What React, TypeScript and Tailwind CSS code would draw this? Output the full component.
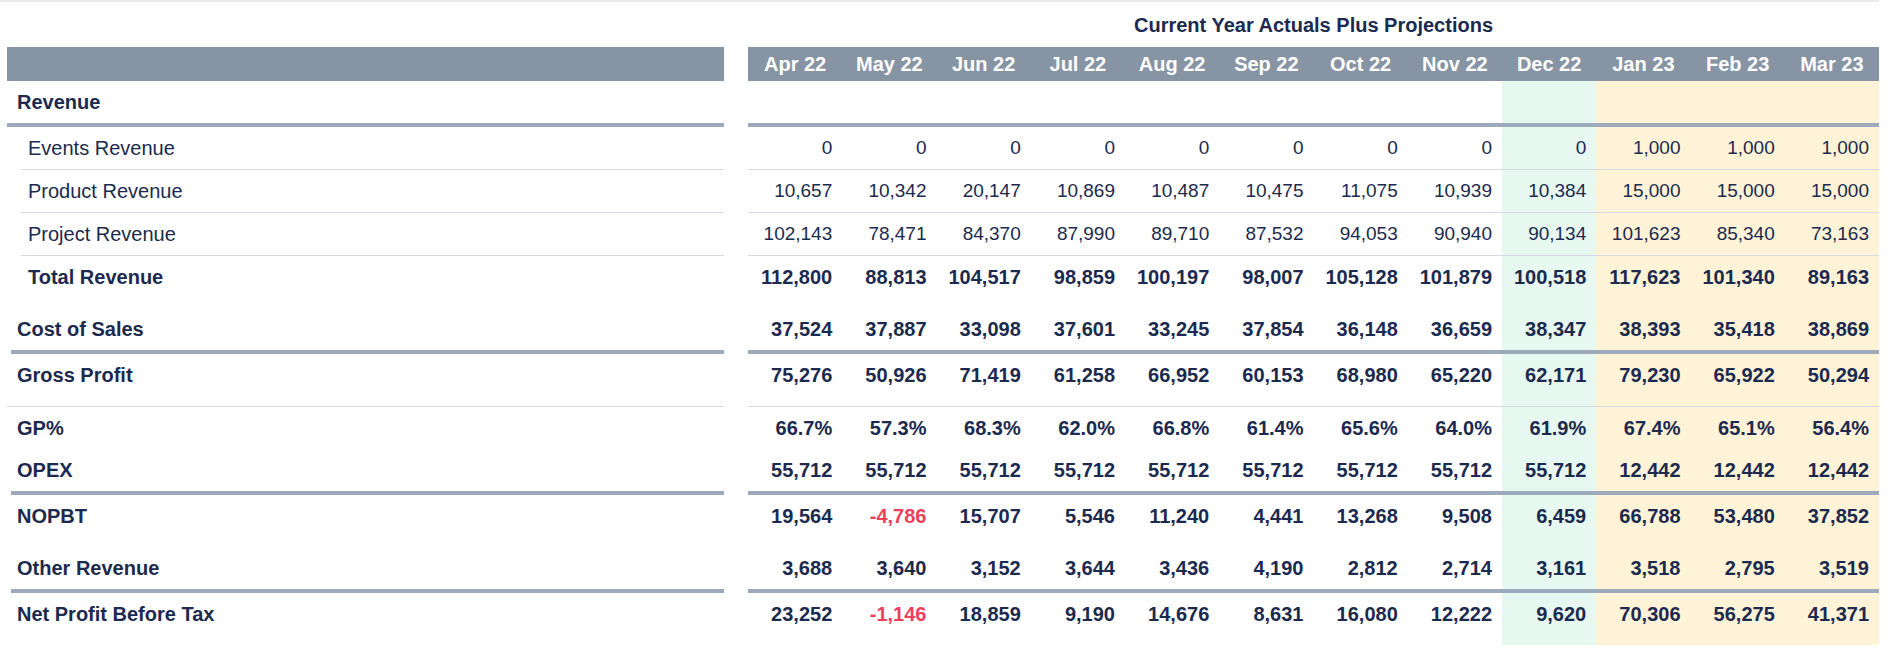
import React from "react";

const months = ["Apr 22","May 22","Jun 22","Jul 22","Aug 22","Sep 22","Oct 22","Nov 22","Dec 22","Jan 23","Feb 23","Mar 23"];

type DataRow = { kind: "data"; label: string; values?: string[]; bold?: boolean; indent?: boolean };
type LineRow = { kind: "thick" | "thickInset" | "thin" | "thinIndent" };
type SpaceRow = { kind: "space" };
type R = DataRow | LineRow | SpaceRow;

const rows: R[] = [
  { kind: "data", label: "Revenue", bold: true },
  { kind: "thick" },
  { kind: "data", label: "Events Revenue", indent: true, values: ["0","0","0","0","0","0","0","0","0","1,000","1,000","1,000"] },
  { kind: "thinIndent" },
  { kind: "data", label: "Product Revenue", indent: true, values: ["10,657","10,342","20,147","10,869","10,487","10,475","11,075","10,939","10,384","15,000","15,000","15,000"] },
  { kind: "thinIndent" },
  { kind: "data", label: "Project Revenue", indent: true, values: ["102,143","78,471","84,370","87,990","89,710","87,532","94,053","90,940","90,134","101,623","85,340","73,163"] },
  { kind: "thinIndent" },
  { kind: "data", label: "Total Revenue", indent: true, bold: true, values: ["112,800","88,813","104,517","98,859","100,197","98,007","105,128","101,879","100,518","117,623","101,340","89,163"] },
  { kind: "space" },
  { kind: "data", label: "Cost of Sales", bold: true, values: ["37,524","37,887","33,098","37,601","33,245","37,854","36,148","36,659","38,347","38,393","35,418","38,869"] },
  { kind: "thickInset" },
  { kind: "data", label: "Gross Profit", bold: true, values: ["75,276","50,926","71,419","61,258","66,952","60,153","68,980","65,220","62,171","79,230","65,922","50,294"] },
  { kind: "space" },
  { kind: "thin" },
  { kind: "data", label: "GP%", bold: true, values: ["66.7%","57.3%","68.3%","62.0%","66.8%","61.4%","65.6%","64.0%","61.9%","67.4%","65.1%","56.4%"] },
  { kind: "data", label: "OPEX", bold: true, values: ["55,712","55,712","55,712","55,712","55,712","55,712","55,712","55,712","55,712","12,442","12,442","12,442"] },
  { kind: "thickInset" },
  { kind: "data", label: "NOPBT", bold: true, values: ["19,564","-4,786","15,707","5,546","11,240","4,441","13,268","9,508","6,459","66,788","53,480","37,852"] },
  { kind: "space" },
  { kind: "data", label: "Other Revenue", bold: true, values: ["3,688","3,640","3,152","3,644","3,436","4,190","2,812","2,714","3,161","3,518","2,795","3,519"] },
  { kind: "thickInset" },
  { kind: "data", label: "Net Profit Before Tax", bold: true, values: ["23,252","-1,146","18,859","9,190","14,676","8,631","16,080","12,222","9,620","70,306","56,275","41,371"] },
  { kind: "space" },
];

function colBg(i: number): string {
  if (i === 8) return "bg-[#E7F8F1]";
  if (i >= 9) return "bg-[#FEF3D7]";
  return "";
}

function renderRow(r: R, idx: number) {
  const cells: React.ReactNode[] = [];
  if (r.kind === "space") {
    cells.push(<div key="l" className="h-[10px]" />);
    cells.push(<div key="g" className="h-[10px]" />);
    months.forEach((_, i) => cells.push(<div key={i} className={`h-[10px] ${colBg(i)}`} />));
  } else if (r.kind === "thick" || r.kind === "thickInset") {
    cells.push(
      <div key="l" className="h-[4px]">
        <div className={`h-full bg-[#9DAABC] ${r.kind === "thickInset" ? "ml-[4px]" : ""}`} />
      </div>
    );
    cells.push(<div key="g" className="h-[4px]" />);
    months.forEach((_, i) => cells.push(<div key={i} className="h-[4px] bg-[#9DAABC]" />));
  } else if (r.kind === "thin" || r.kind === "thinIndent") {
    cells.push(
      <div key="l" className="h-px">
        <div className={`h-full bg-[#D5DAE3] ${r.kind === "thinIndent" ? "ml-[14px]" : ""}`} />
      </div>
    );
    cells.push(<div key="g" className="h-px" />);
    months.forEach((_, i) => cells.push(<div key={i} className="h-px bg-[#D5DAE3]" />));
  } else {
    cells.push(
      <div key="l" className="h-[42px] flex items-center">
        <div
          className={`${r.indent ? "pl-[21px]" : "pl-[10px]"} text-[20px] ${r.bold ? "font-bold" : "font-normal"} text-[#1B2A4E] whitespace-nowrap`}
        >
          {r.label}
        </div>
      </div>
    );
    cells.push(<div key="g" className="h-[42px]" />);
    months.forEach((_, i) => {
      const v = r.values ? r.values[i] : "";
      const neg = v.startsWith("-");
      cells.push(
        <div
          key={i}
          className={`h-[42px] flex items-center justify-end pr-[10px] whitespace-nowrap ${colBg(i)} ${
            r.bold ? "font-bold text-[20px]" : "font-normal text-[19px]"
          } ${neg ? "text-[#EE3F5C]" : "text-[#1B2A4E]"}`}
        >
          {v}
        </div>
      );
    });
  }
  return <React.Fragment key={idx}>{cells}</React.Fragment>;
}

export default function App() {
  return (
    <div className="bg-white min-h-[652px] font-['Liberation_Sans',Arial,sans-serif]">
      <div className="w-[1879px] border-t-2 border-[#E8EAEE] pl-[7px]">
        <div className="grid grid-cols-[717px_24px_repeat(12,minmax(0,1fr))]">
          {/* title row */}
          <div className="h-[45px]" />
          <div className="h-[45px]" />
          <div className="col-span-12 h-[45px] flex items-center justify-center text-[20px] font-bold text-[#1B2A4E]">
            Current Year Actuals Plus Projections
          </div>
          {/* header row */}
          <div className="h-[34px] bg-[#8794A4]" />
          <div className="h-[34px]" />
          {months.map((m) => (
            <div
              key={m}
              className="h-[34px] bg-[#8794A4] flex items-center justify-center text-white font-bold text-[20px] whitespace-nowrap"
            >
              {m}
            </div>
          ))}
          {rows.map((r, i) => renderRow(r, i))}
        </div>
      </div>
    </div>
  );
}
